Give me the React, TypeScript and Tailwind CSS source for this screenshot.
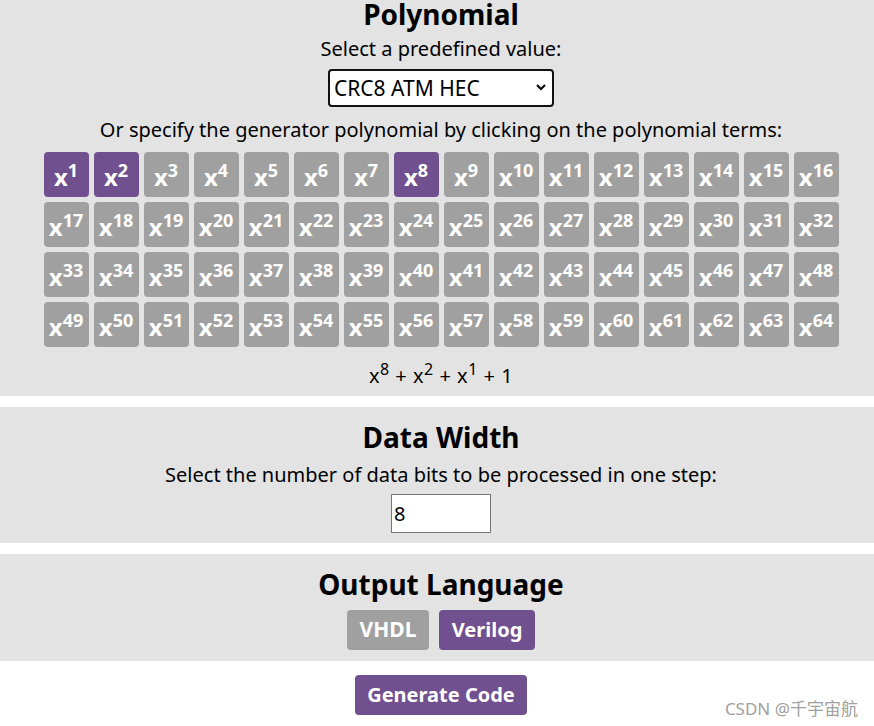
import { useState } from 'react';

const FONT = "font-['Noto_Sans','Noto_Sans_CJK_SC',sans-serif]";

const PRESETS = ['CRC8 ATM HEC', 'CRC16 CCITT', 'CRC32 IEEE 802.3'];

const TermButton = ({ n, active, onClick }: { n: number; active: boolean; onClick: () => void }) => (
  <button
    onClick={onClick}
    className={`h-[45px] w-[45px] rounded-[4px] pt-[5px] flex items-center justify-center text-white font-bold text-[24px] leading-none ${
      active ? 'bg-[#71508f]' : 'bg-[#a0a0a0]'
    }`}
  >
    <span>
      x<sup>{n}</sup>
    </span>
  </button>
);

const App = () => {
  const [terms, setTerms] = useState<number[]>([8, 2, 1]);
  const [width, setWidth] = useState('8');
  const [lang, setLang] = useState<'VHDL' | 'Verilog'>('Verilog');

  const toggle = (n: number) =>
    setTerms((t) => (t.includes(n) ? t.filter((x) => x !== n) : [...t, n].sort((a, b) => b - a)));

  return (
    <div className={`${FONT} relative min-h-[726px] pl-[8px] bg-white text-black text-[20px] text-center`}>
      {/* polynomial */}
      <section className="bg-[#e3e3e3] -ml-[8px] pl-[8px] pt-[1px] pb-[6px] flex flex-col items-center">
        <h2 className="h-[27px] leading-[27px] text-[28px] font-bold">Polynomial</h2>
        <p className="mt-[7px] h-[28px] leading-[28px]">Select a predefined value:</p>
        <div className="relative mt-[6px]">
          <select className="appearance-none h-[38px] w-[226px] bg-white border-2 border-[#111] rounded-[4px] pl-[4px] text-[21px] leading-none outline-none">
            {PRESETS.map((p) => (
              <option key={p}>{p}</option>
            ))}
          </select>
          <svg
            className="absolute right-[8px] top-[15px] pointer-events-none"
            width="10"
            height="7"
            viewBox="0 0 10 7"
            fill="none"
            stroke="#000"
            strokeWidth="2"
          >
            <path d="M1 1l4 4 4-4" />
          </svg>
        </div>
        <p className="mt-[9px] h-[28px] leading-[28px]">
          Or specify the generator polynomial by clicking on the polynomial terms:
        </p>
        <div className="mt-[8px] grid grid-cols-[repeat(16,45px)] gap-[5px]">
          {Array.from({ length: 64 }, (_, i) => i + 1).map((n) => (
            <TermButton key={n} n={n} active={terms.includes(n)} onClick={() => toggle(n)} />
          ))}
        </div>
        <p className="mt-[15px] h-[28px] leading-[28px] tracking-[0.5px]">
          {terms.map((t) => (
            <span key={t}>
              x<sup className="text-[16px]">{t}</sup> +{' '}
            </span>
          ))}
          1
        </p>
      </section>

      {/* data width */}
      <section className="mt-[11px] bg-[#e3e3e3] -ml-[8px] pl-[8px] pt-[16px] pb-[10px] flex flex-col items-center">
        <h2 className="h-[28px] leading-[28px] text-[28px] font-bold">Data Width</h2>
        <p className="mt-[10px] h-[28px] leading-[28px]">Select the number of data bits to be processed in one step:</p>
        <input
          value={width}
          onChange={(e) => setWidth(e.target.value)}
          className="mt-[5px] h-[39px] w-[100px] bg-white border border-[#767676] px-[2px] text-[20px] outline-none"
        />
      </section>

      {/* output language */}
      <section className="mt-[11px] bg-[#e3e3e3] -ml-[8px] pl-[8px] pt-[16px] pb-[11px] flex flex-col items-center">
        <h2 className="h-[28px] leading-[28px] text-[28px] font-bold">Output Language</h2>
        <div className="mt-[12px] flex gap-[10px]">
          <button
            onClick={() => setLang('VHDL')}
            className={`h-[40px] w-[82px] rounded-[4px] text-white font-bold text-[21px] ${
              lang === 'VHDL' ? 'bg-[#71508f]' : 'bg-[#a0a0a0]'
            }`}
          >
            VHDL
          </button>
          <button
            onClick={() => setLang('Verilog')}
            className={`h-[40px] w-[96px] rounded-[4px] text-white font-bold text-[20px] ${
              lang === 'Verilog' ? 'bg-[#71508f]' : 'bg-[#a0a0a0]'
            }`}
          >
            Verilog
          </button>
        </div>
      </section>

      <div className="mt-[14px] flex justify-center">
        <button className="h-[40px] w-[172px] rounded-[4px] bg-[#71508f] text-white font-bold text-[20px]">
          Generate Code
        </button>
      </div>

      <span className="absolute right-[16px] top-[696px] text-[17px] text-[#a0a0a0]">CSDN @千宇宙航</span>
    </div>
  );
};

export default App;
